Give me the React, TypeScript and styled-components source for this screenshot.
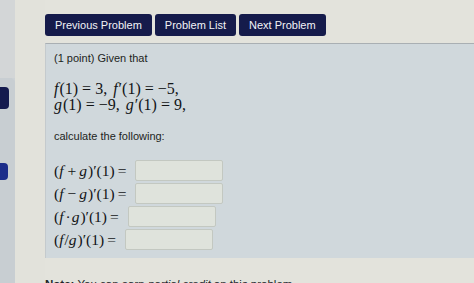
import * as React from 'react';
import styled, { createGlobalStyle } from 'styled-components';

const GlobalStyle = createGlobalStyle`
  html, body {
    margin: 0;
    padding: 0;
    background: #e3e3dc;
    overflow: hidden;
  }
  body {
    font-family: "Liberation Sans", Arial, sans-serif;
    color: #1d1f22;
  }
`;

const Page = styled.div`
  display: flex;
  height: 283px;
  width: 474px;
  overflow: hidden;
`;

const Sidebar = styled.div`
  width: 15px;
  flex-shrink: 0;
  display: flex;
  flex-direction: column;
  background: #cdd2d5;
`;

const SideTop = styled.div`
  height: 78px;
  background: #d3d6d7;
`;

const SideBox = styled.div`
  flex: 1;
  display: flex;
  flex-direction: column;
  padding-top: 9px;
  background: #c8ced2;
  border-top-right-radius: 5px;
`;

const SideTab = styled.div<{ color: string; h: number; w: number; gap: number }>`
  width: ${({ w }) => w}px;
  height: ${({ h }) => h}px;
  margin-top: ${({ gap }) => gap}px;
  background: ${({ color }) => color};
  border-radius: 0 4px 4px 0;
`;

const Gutter = styled.div`
  width: 30px;
  flex-shrink: 0;
  background: #e2e2db;
`;

const Main = styled.div`
  flex: 1;
  display: flex;
  flex-direction: column;
  padding-top: 14px;
`;

const ButtonBar = styled.div`
  display: flex;
  gap: 3px;
`;

const NavButton = styled.button`
  height: 22px;
  padding: 0 10px;
  border: none;
  border-radius: 3px;
  background: #151b4b;
  color: #f2f3f7;
  font-family: "Liberation Sans", Arial, sans-serif;
  font-size: 11px;
  cursor: pointer;
`;

const Panel = styled.div`
  margin-top: 7px;
  height: 215px;
  flex-shrink: 0;
  box-sizing: border-box;
  padding: 6px 8px 0;
  background: #d0d8dc;
  border-top: 1px solid #a9afb3;
  border-left: 1px solid #c4cacd;
  font-size: 11px;
  line-height: 16px;
`;

const Para = styled.div<{ gap?: number }>`
  margin-top: ${({ gap }) => gap ?? 0}px;
`;

const MathBlock = styled.div`
  margin-top: 15px;
  font-family: "Liberation Serif", "Times New Roman", serif;
  font-size: 16px;
  line-height: 16px;
  color: #121416;
`;

const MathLine = styled.div`
  white-space: nowrap;
`;

const V = styled.i`
  font-style: italic;
  padding-right: 1px;
`;

const Op = styled.span<{ space?: number }>`
  margin: 0 ${({ space }) => space ?? 4}px;
`;

const Sep = styled.span`
  margin-right: 6px;
`;

const Answers = styled.div`
  margin-top: 16px;
  display: flex;
  flex-direction: column;
  gap: 2px;
`;

const Row = styled.div`
  display: flex;
  align-items: center;
  height: 21px;
  font-family: "Liberation Serif", "Times New Roman", serif;
  font-size: 15.5px;
  color: #121416;
  white-space: nowrap;
`;

const AnswerInput = styled.input`
  margin-left: 6px;
  width: 88px;
  height: 21px;
  box-sizing: border-box;
  border: 1px solid #c3c8c1;
  border-radius: 2px;
  background: #dfe3dc;
  outline: none;
`;

const Note = styled.div`
  margin-top: 19px;
  font-size: 11.5px;
  line-height: 14px;
  color: #23262a;
`;

const F = () => <V>f</V>;
const G = () => <V>g</V>;

const rows: { op: string; space: number }[] = [
  { op: '+', space: 3 },
  { op: '−', space: 3 },
  { op: '·', space: 1 },
  { op: '/', space: 0 },
];

export default function App() {
  return (
    <>
      <GlobalStyle />
      <Page>
        <Sidebar>
          <SideTop />
          <SideBox>
            <SideTab color="#141a4e" w={9} h={22} gap={0} />
            <SideTab color="#1c2d8a" w={8} h={17} gap={54} />
          </SideBox>
        </Sidebar>
        <Gutter />
        <Main>
          <ButtonBar>
            <NavButton>Previous Problem</NavButton>
            <NavButton>Problem List</NavButton>
            <NavButton>Next Problem</NavButton>
          </ButtonBar>
          <Panel>
            <Para>(1 point) Given that</Para>
            <MathBlock>
              <MathLine>
                <F />(1)<Op>=</Op>3,<Sep />
                <F />′(1)<Op>=</Op>−5,
              </MathLine>
              <MathLine>
                <G />(1)<Op>=</Op>−9,<Sep />
                <G />′(1)<Op>=</Op>9,
              </MathLine>
            </MathBlock>
            <Para gap={15}>calculate the following:</Para>
            <Answers>
              {rows.map(({ op, space }) => (
                <Row key={op}>
                  (<F />
                  <Op space={space}>{op}</Op>
                  <G />)′(1)<Op space={3}>=</Op>
                  <AnswerInput />
                </Row>
              ))}
            </Answers>
          </Panel>
          <Note>
            <b>Note:</b> You can earn <i>partial credit</i> on this problem.
          </Note>
        </Main>
      </Page>
    </>
  );
}
